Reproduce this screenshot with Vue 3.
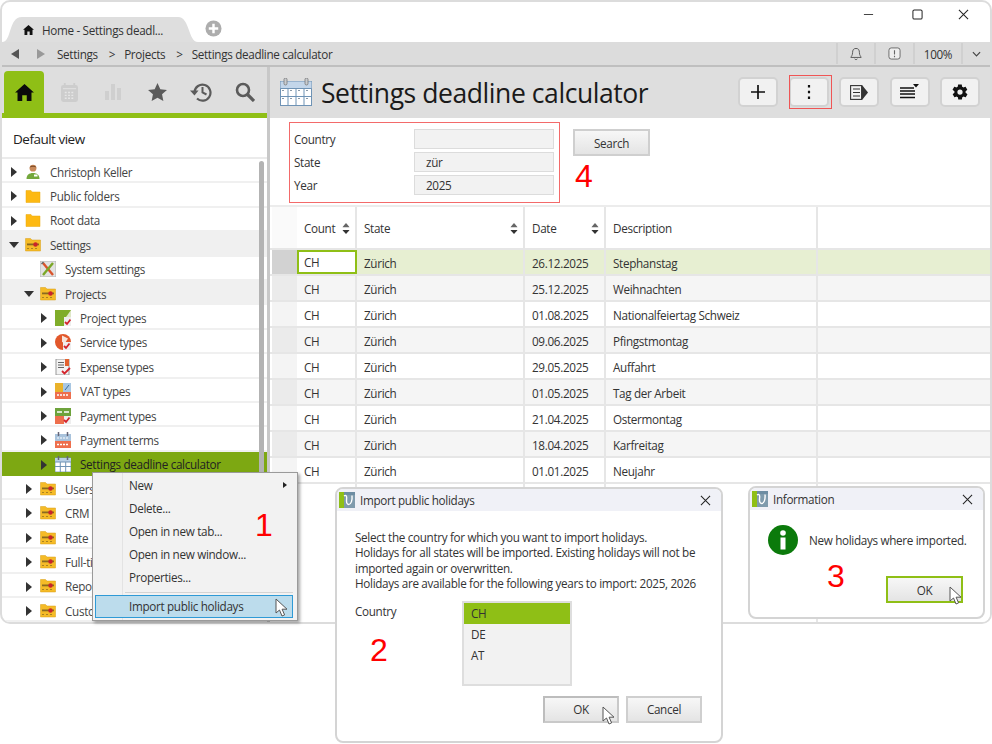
<script setup>
const tree = [
  { t: 'Christoph Keller', l: 0, a: 'r', i: 'user' },
  { t: 'Public folders', l: 0, a: 'r', i: 'folder' },
  { t: 'Root data', l: 0, a: 'r', i: 'folder' },
  { t: 'Settings', l: 0, a: 'd', i: 'lock', open: true },
  { t: 'System settings', l: 1, a: '', i: 'tools' },
  { t: 'Projects', l: 1, a: 'd', i: 'lock', open: true },
  { t: 'Project types', l: 2, a: 'r', i: 'ptype' },
  { t: 'Service types', l: 2, a: 'r', i: 'stype' },
  { t: 'Expense types', l: 2, a: 'r', i: 'etype' },
  { t: 'VAT types', l: 2, a: 'r', i: 'vat' },
  { t: 'Payment types', l: 2, a: 'r', i: 'pay' },
  { t: 'Payment terms', l: 2, a: 'r', i: 'term' },
  { t: 'Settings deadline calculator', l: 2, a: 'r', i: 'cal', sel: true },
  { t: 'Users', l: 1, a: 'r', i: 'lock' },
  { t: 'CRM', l: 1, a: 'r', i: 'lock' },
  { t: 'Rate', l: 1, a: 'r', i: 'lock' },
  { t: 'Full-time', l: 1, a: 'r', i: 'lock' },
  { t: 'Reports', l: 1, a: 'r', i: 'lock' },
  { t: 'Custom', l: 1, a: 'r', i: 'lock' }
]
const rows = [
  ['26.12.2025', 'Stephanstag'],
  ['25.12.2025', 'Weihnachten'],
  ['01.08.2025', 'Nationalfeiertag Schweiz'],
  ['09.06.2025', 'Pfingstmontag'],
  ['29.05.2025', 'Auffahrt'],
  ['01.05.2025', 'Tag der Arbeit'],
  ['21.04.2025', 'Ostermontag'],
  ['18.04.2025', 'Karfreitag'],
  ['01.01.2025', 'Neujahr']
]
const heads = ['Count', 'State', 'Date', 'Description']
const filters = [['Country', ''], ['State', 'zür'], ['Year', '2025']]
const menu = ['New', 'Delete...', 'Open in new tab...', 'Open in new window...', 'Properties...']
</script>

<template>
  <div class="page">
    <svg class="defs" width="0" height="0">
      <defs>
        <symbol id="cursor" viewBox="0 0 13 19"><path d="M1 1v14l3.5-3 2.5 6 2.6-1.1-2.5-5.7H12z" fill="#fff" stroke="#555" stroke-width="1"/></symbol>
        <symbol id="logo" viewBox="0 0 16 16"><rect width="16" height="16" fill="#7f9bad"/><rect width="5" height="16" fill="#8fbf16"/><rect x="5" width="11" height="3" fill="#6d8da3"/><path d="M5 4c2-1.5 3 0 2.6 3-.4 3 .2 5.5 2 5.5 2.400 0 3.900-4 3.400-9" fill="none" stroke="#fff" stroke-width="1.400"/></symbol>
        <symbol id="close" viewBox="0 0 12 12"><path d="M1 1l10 10M11 1L1 11" stroke="#222" stroke-width="1.100" fill="none"/></symbol>
        <symbol id="sort" viewBox="0 0 8 12"><path d="M4 0l4 4.500H0z" fill="#666"/><path d="M4 12L0 7.500h8z" fill="#333"/></symbol>
        <symbol id="user" viewBox="0 0 16 16"><circle cx="8" cy="4.200" r="3.400" fill="#c98a5a"/><path d="M4.600 3.500C5 1 11 1 11.400 3.500 9.500 2.500 6.500 2.500 4.600 3.500z" fill="#7a4a26"/><path d="M1.500 15c0-4 2.500-6 6.500-6s6.500 2 6.500 6z" fill="#74a83c"/><rect x="9" y="10.500" width="3.500" height="2" fill="#fff"/></symbol>
        <symbol id="folder" viewBox="0 0 16 16"><path d="M1 4V2.500h5L7 4h8v10.500H1z" fill="#fdb913" stroke="#e8a90e" stroke-width=".5"/></symbol>
        <symbol id="lock" viewBox="0 0 16 16"><path d="M.5 4V1.500h5L7 3h8.500v11H.5z" fill="#f5bb27" stroke="#d99e14" stroke-width=".5"/><rect x="2" y="6.500" width="12" height="1.800" fill="#8a6a20"/><circle cx="10.500" cy="7.500" r="2.200" fill="#c9242a"/><path d="M2 11.500h2M6 11.500h2M10 11.500h2" stroke="#a98220"/></symbol>
        <symbol id="tools" viewBox="0 0 16 16"><rect width="16" height="16" fill="#e2e2e2" stroke="#b5b5b5"/><path d="M3 2l10 12" stroke="#d9542b" stroke-width="2.400"/><path d="M13 2L3 14" stroke="#7ba728" stroke-width="2.400"/><path d="M1.500 3l2-2" stroke="#666" stroke-width="1.500"/></symbol>
        <symbol id="ptype" viewBox="0 0 16 16"><path d="M0 0h16v7l-6 9H0z" fill="#80ad2a"/><path d="M16 0v7h-5z" fill="#dfe8c8"/><rect x="9" y="7" width="7" height="9" fill="#eee"/><path d="M10 12l2 2 3.500-4.500" stroke="#d4232b" stroke-width="1.800" fill="none"/></symbol>
        <symbol id="stype" viewBox="0 0 16 16"><circle cx="8" cy="8" r="8" fill="#e2582b"/><path d="M7 1.500l6 3-3 4.500-3-1z" fill="#f7e3da"/><rect x="8" y="8" width="8" height="8" fill="#eee"/><path d="M9 12l2 2 3.500-4.500" stroke="#d4232b" stroke-width="1.800" fill="none"/></symbol>
        <symbol id="etype" viewBox="0 0 16 16"><rect x="1" y="0" width="13" height="16" fill="#f3f3f3" stroke="#999"/><path d="M3 3.500h6M3 6h6M3 8.500h6" stroke="#666"/><rect x="10" y="0" width="4" height="7" fill="#e4622f"/><path d="M7 12l2.500 2.500L15 9" stroke="#d4232b" stroke-width="1.800" fill="none"/></symbol>
        <symbol id="vat" viewBox="0 0 16 16"><rect width="8" height="9" fill="#eab22a"/><rect x="8" width="8" height="9" fill="#a9c7e2"/><rect y="9" width="16" height="7" fill="#ee6f4d"/><path d="M2 12h12" stroke="#fff" stroke-width="1.500" stroke-dasharray="2 1"/><path d="M10 7l4-5" stroke="#3a6e9c"/></symbol>
        <symbol id="pay" viewBox="0 0 16 16"><rect width="16" height="8" fill="#6ea33c"/><path d="M2 4h5M9 4h5" stroke="#fff" stroke-width="1.500"/><rect y="8" width="9" height="8" fill="#ee6f4d"/><rect x="9" y="8" width="7" height="8" fill="#eee"/><path d="M9 12l2 2 3.500-4.500" stroke="#d4232b" stroke-width="1.800" fill="none"/></symbol>
        <symbol id="term" viewBox="0 0 16 16"><rect y="2" width="16" height="7" fill="#a9c3dc"/><path d="M3.500 0v4M12.500 0v4" stroke="#667" stroke-width="1.500"/><path d="M2 6h12" stroke="#fff" stroke-dasharray="2 1"/><rect y="9" width="16" height="7" fill="#ee6f4d"/><path d="M2 12.500h12" stroke="#fff" stroke-width="1.500" stroke-dasharray="2 1"/></symbol>
        <symbol id="cal" viewBox="0 0 16 16"><rect y="2" width="16" height="14" fill="#fff" stroke="#6f93b5" stroke-width=".8"/><rect y="2" width="16" height="4" fill="#b9d0e6"/><path d="M3.500 0v4M12.500 0v4" stroke="#667" stroke-width="1.500"/><path d="M0 10.500h16M5.300 6v10M10.700 6v10M0 6h16" stroke="#6f93b5"/></symbol>
        <symbol id="bigcal" viewBox="0 0 32 28"><rect x=".5" y="3.500" width="31" height="24" fill="#fff" stroke="#6f93b5"/><rect x=".5" y="3.500" width="31" height="7" fill="#c3d6ea"/><rect x="4" y="0" width="3" height="7" rx="1.500" fill="#c8ccd0" stroke="#777" stroke-width=".8"/><rect x="25" y="0" width="3" height="7" rx="1.500" fill="#c8ccd0" stroke="#777" stroke-width=".8"/><path d="M.5 18.500h31M8 10.500v17M16 10.500v17M24 10.500v17M.5 10.500h31" stroke="#6f93b5" stroke-width="1"/><path d="M2 12.500h2M10 12.500h2M18 12.500h2M26 12.500h2M2 20.500h2M10 20.500h2M18 20.500h2M26 20.500h2" stroke="#8a9aa8"/></symbol>
      </defs>
    </svg>

    <div class="window">
      <header class="titlebar">
        <div class="tab">
          <svg class="tab-home" viewBox="0 0 12 11" width="11" height="10"><path d="M6 0l6 5.300h-1.600V11H7.300V7.200H4.700V11H1.600V5.300H0z" fill="#111"/></svg>
          <span>Home - Settings deadl...</span>
        </div>
        <svg class="tab-add" viewBox="0 0 18 18" width="17" height="17"><circle cx="9" cy="9" r="8.500" fill="#adadad"/><path d="M9 4v10M4 9h10" stroke="#fff" stroke-width="2.600"/></svg>
        <div class="wincontrols">
          <svg class="win-min" viewBox="0 0 12 12" width="11" height="11"><path d="M1 6h10" stroke="#333" stroke-width="1"/></svg>
          <svg viewBox="0 0 12 12" width="11" height="11"><rect x="1" y="1" width="10" height="10" rx="1.500" fill="none" stroke="#222" stroke-width="1.100"/></svg>
          <svg viewBox="0 0 12 12" width="11" height="11"><use href="#close"/></svg>
        </div>
      </header>

      <nav class="crumbs">
        <svg class="nav-a" viewBox="0 0 8 10" width="8" height="10"><path d="M8 0v10L0 5z" fill="#555"/></svg>
        <svg class="nav-b" viewBox="0 0 8 10" width="8" height="10"><path d="M0 0v10l8-5z" fill="#999"/></svg>
        <span>Settings</span><span class="crumb-sep">&gt;</span><span>Projects</span><span class="crumb-sep">&gt;</span><span>Settings deadline calculator</span>
        <div class="crumb-right">
          <div class="seg s1">
            <svg viewBox="0 0 14 16" width="12" height="14"><path d="M7 1.500c-3 0-4 2-4 5 0 3-1.500 4-2 5.500h12c-.5-1.500-2-2.500-2-5.500 0-3-1-5-4-5zM5.500 13.500c.5 1.500 2.500 1.500 3 0" fill="none" stroke="#555" stroke-width="1.100"/></svg>
          </div>
          <div class="seg s2">
            <svg viewBox="0 0 14 14" width="13" height="13"><rect x="1" y="1" width="12" height="12" rx="2.500" fill="#eee" stroke="#666" stroke-width="1"/><path d="M7 3.500v4.500M7 9.500v1.500" stroke="#666" stroke-width="1.200"/></svg>
          </div>
          <div class="seg s3">100%</div>
          <div class="seg s4">
            <svg viewBox="0 0 10 6" width="9" height="6"><path d="M1 1l4 4 4-4" fill="none" stroke="#444" stroke-width="1.300"/></svg>
          </div>
        </div>
      </nav>

      <div class="main">
        <aside class="left">
          <div class="strip">
            <div class="mode active">
              <svg viewBox="0 0 20 18" width="19" height="17"><path d="M10 0l10 9h-2.600v9h-5v-6H7.600v6h-5V9H0z" fill="#0b0b0b"/></svg>
            </div>
            <div class="mode">
              <svg viewBox="0 0 18 20" width="17" height="19"><rect y="2" width="18" height="18" rx="2.500" fill="#cdcdcd"/><path d="M4 0v4M14 0v4" stroke="#cdcdcd" stroke-width="2"/><path d="M2 6h14" stroke="#e4e4e4"/><path d="M4 10h10M4 13h10M4 16h10" stroke="#e6e6e6" stroke-width="1.500" stroke-dasharray="2 1.500"/></svg>
            </div>
            <div class="mode">
              <svg viewBox="0 0 16 16" width="16" height="16"><rect y="7" width="4" height="9" fill="#cfcfcf"/><rect x="6" width="4" height="16" fill="#cfcfcf"/><rect x="12" y="4" width="4" height="12" fill="#cfcfcf"/></svg>
            </div>
            <div class="mode">
              <svg viewBox="0 0 20 19" width="19" height="18"><path d="M10 0l3 6.500 7 .8-5.200 4.700 1.400 7L10 15.500 3.800 19l1.400-7L0 7.300l7-.8z" fill="#5b5b5b"/></svg>
            </div>
            <div class="mode">
              <svg viewBox="0 0 22 20" width="22" height="20"><path d="M4.500 10a8 8 0 1 1 2.500 6.500" fill="none" stroke="#5b5b5b" stroke-width="2.200"/><path d="M0 8.500h8.500L4.500 13.500z" fill="#5b5b5b"/><path d="M12.500 5v5.500l4 2" fill="none" stroke="#5b5b5b" stroke-width="2"/></svg>
            </div>
            <div class="mode">
              <svg viewBox="0 0 20 20" width="20" height="20"><circle cx="8" cy="8" r="6" fill="none" stroke="#5b5b5b" stroke-width="2.600"/><path d="M12.500 12.500L19 19" stroke="#5b5b5b" stroke-width="3.200"/></svg>
            </div>
          </div>
          <div class="viewname">Default view</div>
          <ul class="tree">
            <li v-for="n in tree" :key="n.t" class="node" :class="[`lv${n.l}`, { open: n.open, sel: n.sel }]">
              <svg v-if="n.a === 'r'" class="arrow" viewBox="0 0 6 10" width="6" height="10"><path d="M0 0v10l6-5z" fill="#333"/></svg>
              <svg v-else-if="n.a === 'd'" class="arrow down" viewBox="0 0 10 6" width="10" height="6"><path d="M0 0h10L5 6z" fill="#333"/></svg>
              <svg class="ticon" width="16" height="16"><use :href="`#${n.i}`"/></svg>
              <span class="ntext">{{ n.t }}</span>
            </li>
          </ul>
          <div class="thumb"></div>
        </aside>

        <section class="right">
          <div class="head">
            <svg class="bigcal" width="32" height="28"><use href="#bigcal"/></svg>
            <h1>Settings deadline calculator</h1>
            <div class="tools">
              <button class="tool">
                <svg viewBox="0 0 14 14" width="14" height="14"><path d="M7 0v14M0 7h14" stroke="#111" stroke-width="1.700"/></svg>
              </button>
              <button class="tool marked">
                <svg viewBox="0 0 4 14" width="4" height="14"><path d="M2 0v2.500M2 5.700v2.600M2 11.500v2.500" stroke="#111" stroke-width="2.200"/></svg>
              </button>
              <button class="tool">
                <svg viewBox="0 0 18 15" width="18" height="15"><rect x=".6" y=".6" width="11" height="13.800" fill="#f4f4f4" stroke="#333" stroke-width="1.100"/><path d="M3 4h7M3 7.500h7M3 11h7" stroke="#333" stroke-width="1.100"/><path d="M12 0l6 7.500L12 15z" fill="#333"/></svg>
              </button>
              <button class="tool">
                <svg viewBox="0 0 19 16" width="19" height="16"><path d="M0 4h14M0 7h15M0 10h15M0 13.500h15" stroke="#111" stroke-width="1.700"/><path d="M13 0h6l-3 3.500z" fill="#111"/></svg>
              </button>
              <button class="tool">
                <svg viewBox="0 0 24 24" width="18" height="18"><path fill="#111" d="M19.400 13c.1-.3.1-.7.100-1s0-.7-.1-1l2.100-1.700c.2-.1.200-.4.100-.6l-2-3.500c-.1-.2-.4-.3-.6-.2l-2.500 1c-.5-.4-1.100-.7-1.700-1l-.4-2.600c0-.2-.2-.4-.5-.4h-4c-.3 0-.5.200-.5.400l-.4 2.600c-.6.300-1.200.6-1.700 1l-2.500-1c-.2-.1-.5 0-.6.200l-2 3.500c-.1.200-.1.500.1.600L4.600 11c0 .3-.1.700-.1 1s0 .7.100 1l-2.100 1.700c-.2.100-.2.400-.1.600l2 3.500c.1.200.4.300.6.200l2.500-1c.5.400 1.100.7 1.700 1l.4 2.600c0 .2.200.4.500.4h4c.3 0 .5-.2.500-.4l.4-2.600c.6-.3 1.200-.6 1.700-1l2.500 1c.2.100.5 0 .6-.2l2-3.500c.1-.2.100-.5-.1-.6zM12 15.500a3.500 3.500 0 1 1 0-7 3.500 3.500 0 0 1 0 7z"/></svg>
              </button>
            </div>
          </div>

          <div class="filters">
            <div class="fbox">
              <div v-for="f in filters" :key="f[0]" class="frow">
                <label>{{ f[0] }}</label>
                <div class="finput">{{ f[1] }}</div>
              </div>
            </div>
            <button class="btn search">Search</button>
          </div>

          <div class="grid">
            <div class="grow ghead">
              <div class="rh"></div>
              <div v-for="(h, i) in heads" :key="h" class="gc" :class="`col${i}`">
                <span>{{ h }}</span>
                <svg v-if="i < 3" viewBox="0 0 8 12" width="8" height="11"><use href="#sort"/></svg>
              </div>
              <div class="gc fill"></div>
            </div>
            <div v-for="(r, i) in rows" :key="r[0]" class="grow" :class="{ cur: i === 0, alt: i % 2 === 1 }">
              <div class="rh"></div>
              <div class="gc col0" :class="{ focus: i === 0 }">CH</div>
              <div class="gc col1">Zürich</div>
              <div class="gc col2">{{ r[0] }}</div>
              <div class="gc col3">{{ r[1] }}</div>
              <div class="gc fill"></div>
            </div>
            <div class="grow rest">
              <div class="rh none"></div>
              <div class="gc col0"></div>
              <div class="gc col1"></div>
              <div class="gc col2"></div>
              <div class="gc col3"></div>
              <div class="gc fill"></div>
            </div>
          </div>
        </section>
      </div>
    </div>

    <div class="ctx">
      <div v-for="m in menu" :key="m" class="mi">
        {{ m }}
        <svg v-if="m === 'New'" class="mi-arrow" viewBox="0 0 4 6" width="4" height="6"><path d="M0 0v6l4-3z" fill="#222"/></svg>
      </div>
      <div class="msep"></div>
      <div class="mi hot">Import public holidays
        <svg class="cur-ico" width="13" height="19"><use href="#cursor"/></svg>
      </div>
    </div>

    <div class="dlg import">
      <div class="dtitle">
        <svg width="16" height="16"><use href="#logo"/></svg>
        <span>Import public holidays</span>
        <svg class="dclose" width="11" height="11"><use href="#close"/></svg>
      </div>
      <div class="dbody">
        <p>Select the country for which you want to import holidays.<br>Holidays for all states will be imported. Existing holidays will not be imported again or overwritten.<br>Holidays are available for the following years to import: 2025, 2026</p>
        <div class="pick">
          <span class="plabel">Country</span>
          <div class="listbox">
            <div class="li on">CH</div>
            <div class="li">DE</div>
            <div class="li">AT</div>
          </div>
        </div>
        <div class="dbtns">
          <button class="btn ok">OK<svg class="cur-ico" width="13" height="19"><use href="#cursor"/></svg></button>
          <button class="btn cancel">Cancel</button>
        </div>
      </div>
    </div>

    <div class="dlg info">
      <div class="dtitle">
        <svg width="16" height="16"><use href="#logo"/></svg>
        <span>Information</span>
        <svg class="dclose" width="11" height="11"><use href="#close"/></svg>
      </div>
      <div class="imsg">
        <svg viewBox="0 0 30 30" width="30" height="30"><circle cx="15" cy="15" r="15" fill="#0b7a0b"/><circle cx="15" cy="8" r="2.800" fill="#fff"/><rect x="12.500" y="12.500" width="5" height="12" fill="#fff"/></svg>
        <span>New holidays where imported.</span>
      </div>
      <div class="ibtn">
        <button class="btn ok2">OK<svg class="cur-ico" width="13" height="19"><use href="#cursor"/></svg></button>
      </div>
    </div>

    <span class="mark m1">1</span>
    <span class="mark m2">2</span>
    <span class="mark m3">3</span>
    <span class="mark m4">4</span>
  </div>
</template>

<style>
html, body { margin: 0; background: #fff; }
</style>

<style scoped>
.page { position: relative; width: 992px; height: 744px; overflow: hidden; background: #fff; font-family: "Open Sans", "Noto Sans", sans-serif; font-size: 11.700px; letter-spacing: -.32px; color: #333; }
.defs { position: absolute; }
.page * { box-sizing: border-box; }
.window { height: 624px; border: 2px solid #dcdcdc; border-radius: 10px; display: flex; flex-direction: column; overflow: hidden; background: #fff; }
.titlebar { height: 40px; flex: none; display: flex; align-items: flex-end; position: relative; }
.tab { width: 196px; height: 25px; background: #dedede; clip-path: path("M0 25 C10 25 6 0 20 0 L176 0 C188 0 186 25 196 25 Z"); display: flex; align-items: center; gap: 8px; padding-left: 21px; }
.tab-home { flex: none; }
.tab span { color: #333; }
.tab-add { margin: 0 0 5px 7px; }
.wincontrols { position: absolute; right: 21px; top: 7px; display: flex; gap: 35px; }
.win-min { margin-right: 3px; }
.crumbs { height: 25px; flex: none; background: #dcdcdc; border-bottom: 2px solid #bfbfbf; display: flex; align-items: center; padding-left: 9px; }
.nav-a { margin-right: 18px; }
.nav-b { margin-right: 12px; }
.crumb-sep { margin: 0 9px 0 11px; }
.crumb-right { margin-left: auto; display: flex; height: 100%; }
.seg { border-left: 2px solid #d0d0d0; display: flex; align-items: center; justify-content: center; height: 21px; margin-top: 1px; }
.s1 { width: 38px; }
.s2 { width: 39px; }
.s3 { width: 48px; }
.s4 { width: 29px; }
.main { flex: 1; display: flex; min-height: 0; }
.left { width: 265px; flex: none; position: relative; display: flex; flex-direction: column; }
.strip { height: 51px; flex: none; background: #dedede; border-bottom: 5px solid #8fbf16; display: flex; padding: 4px 0 0 2px; }
.mode { width: 44.500px; display: flex; align-items: center; justify-content: center; }
.mode.active { width: 41px; background: #8fbf16; border-radius: 4px 4px 0 0; margin-right: 3px; }
.viewname { height: 41px; flex: none; border-bottom: 2px solid #ebebeb; display: flex; align-items: center; padding: 3px 0 0 11px; font-size: 13.500px; letter-spacing: -.5px; color: #222; }
.tree { list-style: none; margin: 0; padding: 0; flex: 1; overflow: hidden; }
.node { height: 24.400px; display: flex; align-items: center; padding-top: 3px; border-bottom: 2px solid #f0f0f0; position: relative; color: #444; }
.node .arrow { position: absolute; top: 8px; }
.node .arrow.down { top: 10px; margin-left: -2px; }
.lv0 { padding-left: 23px; }
.lv1 { padding-left: 38px; }
.lv2 { padding-left: 53px; }
.lv0 .arrow { left: 9px; }
.lv1 .arrow { left: 24px; }
.lv2 .arrow { left: 39px; }
.ticon { flex: none; margin-right: 9px; }
.node.open { background: #f0f0f0; }
.node.sel { background: #7da812; color: #222; border-bottom-color: #7da812; }
.thumb { position: absolute; left: 257px; top: 94px; width: 5px; height: 317px; background: #b3b3b3; border-radius: 3px; }
.right { flex: 1; display: flex; flex-direction: column; min-width: 0; border-left: 3px solid #c8c8c8; }
.head { height: 51px; flex: none; background: #dedede; display: flex; align-items: center; padding: 0 10px 1px 10px; }
.bigcal { flex: none; }
h1 { margin: 2px 0 0 9px; font-size: 26.500px; font-weight: 400; letter-spacing: -.43px; color: #1a1a1a; line-height: 1; white-space: nowrap; }
.tools { margin-left: auto; display: flex; gap: 10.500px; }
.tool { width: 40px; height: 30px; border: 2px solid #d2d2d2; border-radius: 5px; background: #f1f1f1; display: flex; align-items: center; justify-content: center; padding: 0; }
.tool.marked { position: relative; }
.tool.marked::after { content: ""; position: absolute; inset: -4px -5px -4px -2px; border: 1px solid #ef5555; }
.filters { height: 89px; flex: none; display: flex; align-items: flex-start; padding: 4px 0 0 19px; border-bottom: 2px solid #ececec; }
.fbox { width: 271px; height: 81px; border: 1px solid #f36a6a; padding: 6px 5px 0 4px; display: flex; flex-direction: column; gap: 3px; }
.frow { display: flex; justify-content: space-between; align-items: center; height: 20px; }
.finput { width: 140px; height: 20px; background: #f2f2f2; border: 1px solid #dcdcdc; padding: 0 11px; line-height: 18px; color: #333; }
.btn { font: inherit; letter-spacing: inherit; color: #333; background: linear-gradient(#f7f7f7, #e4e4e4); border: 2px solid #cfcfcf; padding: 0; }
.search { width: 77px; height: 27px; margin: 7px 0 0 13px; }
.grid { flex: 1; display: flex; flex-direction: column; min-height: 0; }
.grow { display: flex; height: 26px; flex: none; border-bottom: 2px solid #e6e6e6; }
.rh { width: 27px; background: #f4f4f4; flex: none; border-left: 2px solid #fff; }
.rh.none { background: #fff; }
.gc { display: flex; align-items: center; padding: 1px 7px 0; border-right: 2px solid #e6e6e6; flex: none; color: #333; }
.col0 { width: 60px; }
.col1 { width: 168px; }
.col2 { width: 81px; }
.col3 { width: 212px; }
.gc.fill { flex: 1; border-right: 0; }
.ghead { height: 43px; }
.ghead .rh { background: #fafafa; }
.ghead .gc { justify-content: space-between; padding-right: 5px; }
.alt { background: #f5f5f5; }
.alt .rh { background: #ebebeb; }
.cur { background: #e7efd2; }
.cur .rh { background: #d2d2d2; }
.gc.focus { background: #fff; border: 2px solid #8fbf16; padding: 0 5px; }
.grow.rest { flex: 1; height: auto; border-bottom: 0; background: #fff; }
.ctx { position: absolute; left: 92px; top: 472px; width: 206px; height: 149px; background: #f2f2f2; border: 1px solid #9a9a9a; box-shadow: 2px 2px 3px rgba(0,0,0,.35); padding: 0 4px 0 2px; color: #333; }
.ctx::before { content: ""; position: absolute; left: 29px; top: 0; bottom: 0; width: 1px; background: #e3e3e3; }
.mi { height: 23.200px; display: flex; align-items: center; padding-left: 34px; position: relative; }
.mi-arrow { position: absolute; right: 6px; top: 9px; }
.msep { height: 1px; background: #d4d4d4; margin: 3px 0 2px 30px; }
.mi.hot { background: #bcdcec; border: 1px solid #2e9ad6; height: 23px; padding-left: 33px; z-index: 1; }
.cur-ico { position: absolute; }
.hot .cur-ico { right: 4px; top: 2px; }
.dlg { position: absolute; background: #fff; border: 2px solid #d4d4d4; border-radius: 8px; overflow: hidden; color: #333; }
.import { left: 335px; top: 487px; width: 388px; height: 256px; }
.info { left: 748px; top: 486px; width: 237px; height: 133px; }
.dtitle { height: 22px; background: #f0f1f7; display: flex; align-items: center; padding: 0 0 0 2px; gap: 5px; position: relative; color: #333; }
.dclose { position: absolute; right: 10px; top: 6px; }
.dbody { padding: 19px 17px 0 18px; }
.dbody p { margin: 0; line-height: 15.400px; color: #333; }
.pick { display: flex; margin-top: 9px; }
.plabel { width: 107px; padding-top: 2px; }
.listbox { width: 110px; height: 85px; background: #f2f2f2; border: 2px solid #dedede; }
.li { height: 21px; padding-left: 7px; line-height: 20px; }
.li.on { background: #8fbf16; }
.dbtns { display: flex; justify-content: flex-end; gap: 7px; margin-top: 10px; padding-right: 2px; }
.ok, .cancel { width: 76px; height: 27px; position: relative; }
.ok { border-color: #bdbdbd #c9c9c9 #c9c9c9 #bdbdbd; }
.ok .cur-ico { left: 57px; top: 8px; }
.imsg { display: flex; align-items: center; gap: 11px; padding: 15px 0 0 18px; }
.ibtn { display: flex; justify-content: flex-end; padding: 21px 20px 0 0; }
.ok2 { width: 77px; height: 27px; border-color: #8fbf16; position: relative; }
.ok2 .cur-ico { left: 61px; top: 8px; }
.mark { position: absolute; color: #f00; font-family: "Liberation Sans", sans-serif; font-size: 32px; letter-spacing: 0; line-height: 1; }
.m1 { left: 255px; top: 509px; }
.m2 { left: 370px; top: 634px; }
.m3 { left: 827px; top: 560px; }
.m4 { left: 575px; top: 160px; }
</style>
